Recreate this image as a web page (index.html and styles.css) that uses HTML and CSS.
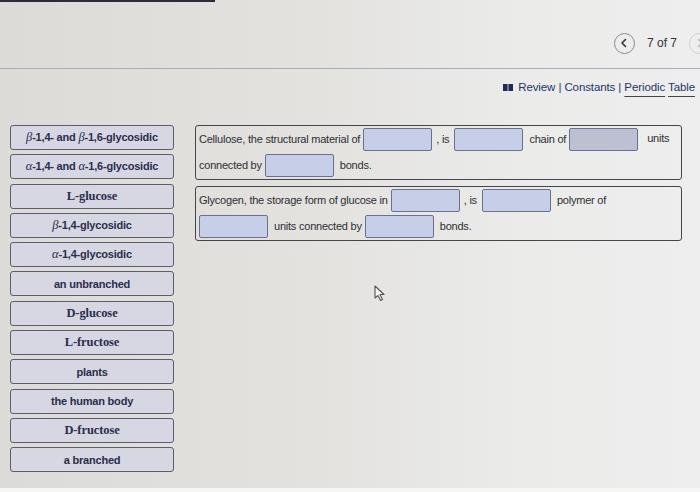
FILE: index.html
```html
<!DOCTYPE html>
<html>
<head>
<meta charset="utf-8">
<link rel="stylesheet" href="styles.css">
</head>
<body>
<div class="screen">
  <div class="topbar"></div>
  <div class="nav">
    <span class="circle prev"><svg width="10" height="10" viewBox="0 0 10 10"><path d="M6.5 1.5 L3 5 L6.5 8.5" fill="none" stroke="#333" stroke-width="1.6" stroke-linecap="round" stroke-linejoin="round"/></svg></span>
    <span class="count">7 of 7</span>
    <span class="circle next"><svg width="10" height="10" viewBox="0 0 10 10"><path d="M3.5 1.5 L7 5 L3.5 8.5" fill="none" stroke="#bbb" stroke-width="1.4" stroke-linecap="round" stroke-linejoin="round"/></svg></span>
  </div>
  <div class="rule"></div>
  <div class="links">
    <svg class="book" width="10" height="7" viewBox="0 0 10 7"><rect x="0" y="0" width="4.6" height="7" fill="#1f2a55"/><rect x="5.4" y="0" width="4.6" height="7" fill="#1f2a55"/></svg>
    <span class="linktext">Review <span class="sep">|</span> Constants <span class="sep">|</span> <span class="ul">Periodic</span> <span class="ul">Table</span></span>
  </div>
  <div class="main">
    <div class="bank">
      <div class="item"><span><i class="gr">β</i>-1,4- and <i class="gr">β</i>-1,6-glycosidic</span></div>
      <div class="item"><span><i class="gr">α</i>-1,4- and <i class="gr">α</i>-1,6-glycosidic</span></div>
      <div class="item serif"><span>L-glucose</span></div>
      <div class="item"><span><i class="gr">β</i>-1,4-glycosidic</span></div>
      <div class="item"><span><i class="gr">α</i>-1,4-glycosidic</span></div>
      <div class="item"><span>an unbranched</span></div>
      <div class="item serif"><span>D-glucose</span></div>
      <div class="item serif"><span>L-fructose</span></div>
      <div class="item"><span>plants</span></div>
      <div class="item"><span>the human body</span></div>
      <div class="item serif"><span>D-fructose</span></div>
      <div class="item"><span>a branched</span></div>
    </div>
    <div class="panels">
      <div class="panel">
        <div class="row">
          <span class="t">Cellulose, the structural material of</span><span class="blank"></span><span class="t tight">, is</span><span class="blank"></span><span class="t">chain of</span><span class="blank gray"></span><span class="t up">units</span>
        </div>
        <div class="row">
          <span class="t">connected by</span><span class="blank"></span><span class="t">bonds.</span>
        </div>
      </div>
      <div class="panel">
        <div class="row">
          <span class="t">Glycogen, the storage form of glucose in</span><span class="blank"></span><span class="t tight">, is</span><span class="blank"></span><span class="t">polymer of</span>
        </div>
        <div class="row">
          <span class="blank first"></span><span class="t">units connected by</span><span class="blank"></span><span class="t">bonds.</span>
        </div>
      </div>
    </div>
  </div>
  <svg class="cursor" width="12" height="17" viewBox="0 0 12 17"><path d="M1 1 L1 13 L4 10.5 L6.5 15.5 L8.5 14.5 L6 9.5 L10 9.5 Z" fill="#f4f4f4" stroke="#555" stroke-width="1.1" stroke-linejoin="round"/></svg>
</div>
</body>
</html>
```

FILE: styles.css
```css
* { box-sizing: border-box; }
html, body { margin: 0; padding: 0; }
body {
  width: 700px;
  height: 492px;
  overflow: hidden;
  font-family: "Liberation Sans", Arial, sans-serif;
}
.screen {
  position: relative;
  width: 700px;
  height: 492px;
  background: linear-gradient(90deg, #dcdbd7 0%, #e3e2df 45%, #ebebea 75%, #eeeeee 100%);
  border-bottom: 4px solid #f6f6f4;
}
.topbar {
  width: 215px;
  height: 2px;
  background: #2b2b3c;
}
.nav {
  display: flex;
  justify-content: flex-end;
  align-items: center;
  height: 22px;
  margin-top: 30px;
  margin-right: -10px;
}
.circle {
  width: 21px;
  height: 21px;
  border-radius: 50%;
  display: flex;
  align-items: center;
  justify-content: center;
}
.prev { border: 1px solid #8a8a8a; }
.next { border: 1px solid #cfcfcf; }
.count {
  font-size: 12px;
  color: #333;
  margin: 0 12px 0 12px;
}
.rule {
  height: 1px;
  margin-top: 14px;
  background: #a4aebf;
}
.links {
  display: flex;
  justify-content: flex-end;
  align-items: center;
  margin-top: 10px;
  padding-right: 5px;
  font-size: 11.5px;
  color: #25346a;
  height: 16px;
  letter-spacing: -0.1px;
}
.book { margin-right: 5px; }
.sep { color: #25346a; }
.ul { text-decoration: underline; text-underline-offset: 5px; text-decoration-color: #444; }
.main {
  display: flex;
  margin-top: 30px;
  padding-left: 10px;
}
.bank {
  width: 164px;
  display: flex;
  flex-direction: column;
  gap: 4.3px;
}
.item {
  height: 25px;
  background: #d6d7e2;
  border: 1.5px solid #5c5c6b;
  border-radius: 3px;
  display: flex;
  align-items: center;
  justify-content: center;
  font-size: 11px;
  font-weight: bold;
  color: #2a2d4c;
  letter-spacing: -0.2px;
}
.item.serif {
  font-family: "Liberation Serif", "Times New Roman", serif;
  font-size: 12.5px;
  letter-spacing: -0.1px;
}
.gr {
  font-family: "Liberation Serif", "Times New Roman", serif;
  font-style: italic;
  font-weight: normal;
  font-size: 12.5px;
}
.panels {
  margin-left: 21px;
  width: 487px;
  display: flex;
  flex-direction: column;
  gap: 6px;
}
.panel {
  border: 1.5px solid #45454d;
  border-radius: 3px;
  padding: 1px 3px 2px 3px;
}
.row {
  display: flex;
  align-items: center;
  height: 24px;
  margin-bottom: 2px;
}
.row:last-child { margin-bottom: 0; }
.t {
  font-size: 11px;
  color: #2e2e34;
  letter-spacing: -0.22px;
  margin-right: 3px;
}
.t.up { margin-top: -3px; }
.blank + .t { margin-left: 6px; }
.blank + .t.up { margin-left: 9px; }
.blank + .t.tight { margin-left: 4px; margin-right: 5px; }
.blank {
  width: 69px;
  height: 23px;
  background: #c7cfe8;
  border: 1.5px solid #6a7090;
  border-radius: 2px;
}
.blank.gray { background: #bcc0d2; }
.cursor {
  position: absolute;
  left: 374px;
  top: 285px;
}
```
